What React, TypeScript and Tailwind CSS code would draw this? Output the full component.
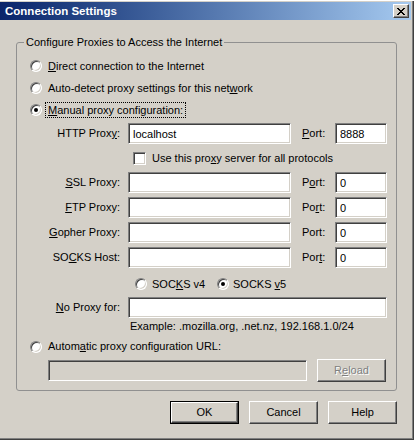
import React from "react";

const sunken =
  "border border-t-[#808080] border-l-[#808080] border-b-white border-r-white shadow-[inset_1px_1px_0_#404040,inset_-1px_-1px_0_#d4d0c8]";

const Radio = ({ checked = false }: { checked?: boolean }) => (
  <span
    className={`relative flex h-[12px] w-[12px] shrink-0 items-center justify-center rounded-full bg-white ${sunken}`}
  >
    {checked && <span className="h-[4px] w-[4px] rounded-full bg-black" />}
  </span>
);

const Field = ({ value = "", w, disabled = false }: { value?: string; w: string; disabled?: boolean }) => (
  <input
    type="text"
    readOnly
    value={value}
    className={`h-[21px] ${w} ${sunken} ${disabled ? "bg-[#d4d0c8]" : "bg-white"} pl-[4px] text-[11px] text-black outline-none`}
  />
);

const Button = ({ children, isDefault = false, disabled = false }: { children: React.ReactNode; isDefault?: boolean; disabled?: boolean }) => {
  const face = (
    <div
      className={`flex h-full w-full items-center justify-center border border-t-white border-l-white border-b-[#404040] border-r-[#404040] shadow-[inset_-1px_-1px_0_#808080] ${
        disabled ? "text-[#808080] [text-shadow:1px_1px_0_#ffffff]" : "text-black"
      }`}
    >
      {children}
    </div>
  );
  return isDefault ? (
    <div className="h-[23px] w-[69px] border border-black">{face}</div>
  ) : (
    <div className="h-[23px] w-[69px]">{face}</div>
  );
};

const ProxyRow = ({ label, port, host = "", portValue = "0", className = "" }: { label: React.ReactNode; port: React.ReactNode; host?: string; portValue?: string; className?: string }) => (
  <div className={`flex h-[21px] items-center ${className}`}>
    <div className="w-[111px] pr-[8px] text-right">{label}</div>
    <Field w="w-[163px]" value={host} />
    <div className="w-[44px] pl-[11px]">{port}</div>
    <Field w="w-[52px]" value={portValue} />
  </div>
);

const App = () => {
  return (
    <div className="h-[440px] w-[414px] overflow-hidden bg-[#d4d0c8] pt-[2px] pr-[3px] pb-[3px] font-['Liberation_Sans',Arial,sans-serif] text-[11px] leading-[13px] text-black shadow-[inset_0_1px_0_#ffffff,inset_-1px_-1px_0_#404040,inset_-2px_-2px_0_#808080]">
      {/* Title bar */}
      <div className="flex h-[18px] items-center justify-between bg-linear-to-r from-[#0a246a] to-[#a6caf0] pl-[5px] pr-[2px]">
        <span className="text-[11.5px] font-bold text-white">Connection Settings</span>
        <div className="flex h-[14px] w-[16px] items-center justify-center border border-t-white border-l-white border-b-[#404040] border-r-[#404040] bg-[#d4d0c8] shadow-[inset_-1px_-1px_0_#808080]">
          <svg width="8" height="7" viewBox="0 0 8 7" shapeRendering="crispEdges">
            <path d="M0 0h2v1H0zM6 0h2v1H6zM1 1h2v1H1zM5 1h2v1H5zM2 2h4v1H2zM3 3h2v1H3zM2 4h4v1H2zM1 5h2v1H1zM5 5h2v1H5zM0 6h2v1H0zM6 6h2v1H6z" fill="#000" />
          </svg>
        </div>
      </div>

      {/* Group box */}
      <fieldset className="mt-[16px] ml-[16px] w-[381px] rounded-[3px] border border-[#909090] pt-[6px] pb-[8px]">
        <legend className="ml-[7px] px-[2px] leading-[13px]">Configure Proxies to Access the Internet</legend>

        <div className="flex h-[22px] items-center gap-[6px] pl-[13px]">
          <Radio />
          <span>
            <u>D</u>irect connection to the Internet
          </span>
        </div>
        <div className="flex h-[22px] items-center gap-[6px] pl-[13px]">
          <Radio />
          <span>
            Auto-detect proxy settings for this net<u>w</u>ork
          </span>
        </div>
        <div className="flex h-[22px] items-center gap-[6px] pl-[13px]">
          <Radio checked />
          <span className="-ml-[3px] border border-dotted border-black px-[2px] leading-[14px]">
            <u>M</u>anual proxy configuration:
          </span>
        </div>

        <ProxyRow
          className="mt-[2px]"
          label={<>HTTP Prox<u>y</u>:</>}
          host="localhost"
          port={<><u>P</u>ort:</>}
          portValue="8888"
        />

        <div className="flex h-[28px] items-center gap-[6px] pl-[116px]">
          <span className={`h-[13px] w-[13px] shrink-0 bg-white ${sunken}`} />
          <span>
            Use this pro<u>x</u>y server for all protocols
          </span>
        </div>

        <ProxyRow label={<><u>S</u>SL Proxy:</>} port={<>P<u>o</u>rt:</>} />
        <ProxyRow className="mt-[4px]" label={<><u>F</u>TP Proxy:</>} port={<>Po<u>r</u>t:</>} />
        <ProxyRow className="mt-[4px]" label={<><u>G</u>opher Proxy:</>} port={<>Port:</>} />
        <ProxyRow className="mt-[4px]" label={<>SO<u>C</u>KS Host:</>} port={<>Por<u>t</u>:</>} />

        <div className="flex h-[29px] items-center pt-[3px] pl-[118px]">
          <div className="flex w-[82px] items-center gap-[5px]">
            <Radio />
            <span>
              SOC<u>K</u>S v4
            </span>
          </div>
          <div className="flex items-center gap-[4px]">
            <Radio checked />
            <span>
              SOCKS <u>v</u>5
            </span>
          </div>
        </div>

        <div className="flex h-[21px] items-center">
          <div className="w-[111px] pr-[8px] text-right">
            <u>N</u>o Proxy for:
          </div>
          <Field w="w-[259px]" />
        </div>

        <div className="flex h-[16px] items-center pl-[113px]">Example: .mozilla.org, .net.nz, 192.168.1.0/24</div>

        <div className="flex h-[25px] items-center gap-[6px] pl-[13px]">
          <Radio />
          <span>
            Autom<u>a</u>tic proxy configuration URL:
          </span>
        </div>

        <div className="flex h-[23px] items-center gap-[10px] pl-[31px]">
          <Field w="w-[259px]" disabled />
          <div className="h-[23px] w-[70px]">
            <Button disabled>
              R<u>e</u>load
            </Button>
          </div>
        </div>
      </fieldset>

      {/* Dialog buttons */}
      <div className="mt-[10px] flex justify-end gap-[10px] pr-[14px]">
        <Button isDefault>OK</Button>
        <Button>Cancel</Button>
        <Button>Help</Button>
      </div>
    </div>
  );
};

export default App;
